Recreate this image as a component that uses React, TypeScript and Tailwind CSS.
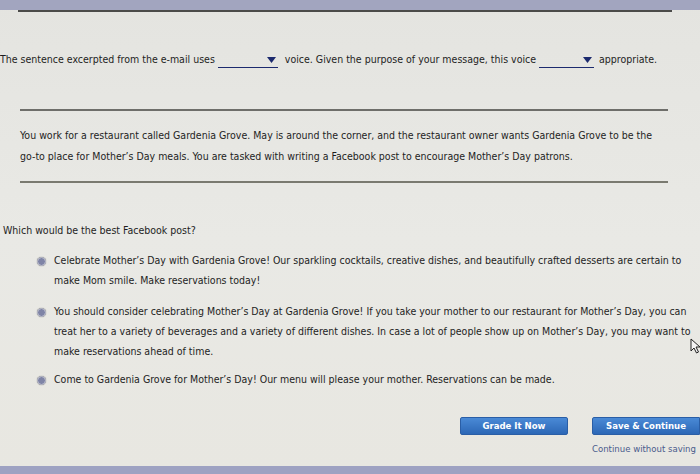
const font = { fontFamily: '"DejaVu Sans Condensed", "DejaVu Sans", sans-serif' };

function Blank({ width }: { width: string }) {
  return (
    <span className={`inline-flex items-end justify-end ${width} h-[14px] border-b border-[#1c2a6e] mx-[3px] align-bottom`}>
      <svg width="9" height="6" viewBox="0 0 9 6" className="mb-[4px] mr-[2px]">
        <path d="M0 0 L9 0 L4.5 6 Z" fill="#1c2a6e" />
      </svg>
    </span>
  );
}

function Radio() {
  return (
    <span className="shrink-0 w-[9px] h-[9px] rounded-full bg-[#7f84a6] border border-[#c4c6d4] shadow-[0_0_1px_#666] mt-[3px]" />
  );
}

const options = [
  ["Celebrate Mother’s Day with Gardenia Grove! Our sparkling cocktails, creative dishes, and beautifully crafted desserts are certain to", "make Mom smile. Make reservations today!"],
  ["You should consider celebrating Mother’s Day at Gardenia Grove! If you take your mother to our restaurant for Mother’s Day, you can", "treat her to a variety of beverages and a variety of different dishes. In case a lot of people show up on Mother’s Day, you may want to", "make reservations ahead of time."],
  ["Come to Gardenia Grove for Mother’s Day! Our menu will please your mother. Reservations can be made."],
];

const spacing = ['mt-[15px]', 'mt-[15px]', 'mt-[12px]'];

export default function App() {
  return (
    <div className="relative w-[700px] h-[474px] overflow-hidden bg-gradient-to-b from-[#e4e4e0] via-[#e9e9e5] to-[#e8e7e1] text-[#1e1e1e] text-[10.5px] flex flex-col" style={font}>
      <div className="h-[10px] bg-[#a2a5bf] shrink-0" />
      <div className="ml-[18px] w-[654px] h-[2px] bg-[#4b4b49] shrink-0" />

      <div className="mt-[42px] h-[14px] flex items-end whitespace-nowrap">
        <span>The sentence excerpted from the e-mail uses</span>
        <Blank width="w-[60px]" />
        <span className="ml-[4px]">voice. Given the purpose of your message, this voice</span>
        <Blank width="w-[55px]" />
        <span className="ml-[2px]">appropriate.</span>
      </div>

      <div className="mt-[41px] ml-[20px] w-[648px] h-[2px] bg-[#6e6e6a] shrink-0" />

      <div className="pl-[20px] pt-[14px] leading-[21px] whitespace-nowrap">
        <div>You work for a restaurant called Gardenia Grove. May is around the corner, and the restaurant owner wants Gardenia Grove to be the</div>
        <div>go-to place for Mother’s Day meals. You are tasked with writing a Facebook post to encourage Mother’s Day patrons.</div>
      </div>

      <div className="mt-[14px] ml-[20px] w-[648px] h-[2px] bg-[#7a7a70] shrink-0" />

      <div className="mt-[40px] pl-[3px]">Which would be the best Facebook post?</div>

      <div className="pl-[37px] flex flex-col">
        {options.map((lines, i) => (
          <div key={i} className={`flex gap-[8px] ${spacing[i]}`}>
            <Radio />
            <div className="leading-[20px] -mt-[4px] whitespace-nowrap">
              {lines.map((l, j) => (
                <div key={j}>{l}</div>
              ))}
            </div>
          </div>
        ))}
      </div>

      <div className="mt-[28px] flex justify-end gap-[24px] text-white font-bold text-[9.5px]">
        <button className="w-[108px] h-[18px] rounded-[2px] bg-gradient-to-b from-[#4a8ad6] to-[#2c67b6] border border-[#2a5ea6]">Grade It Now</button>
        <button className="w-[108px] h-[18px] rounded-l-[2px] bg-gradient-to-b from-[#4a8ad6] to-[#2c67b6] border border-[#2a5ea6]">Save &amp; Continue</button>
      </div>
      <div className="mt-[7px] ml-[592px] text-[#4a5b8c] text-[9.5px]">Continue without saving</div>

      <div className="mt-auto h-[8px] bg-[#9ea2c2] shrink-0" />

      <svg className="absolute left-[690px] top-[338px]" width="12" height="16" viewBox="0 0 12 16">
        <path d="M1 1 L1 13 L4 10 L6.5 15 L8.5 14 L6 9 L10 9 Z" fill="#f4f4f4" stroke="#222" strokeWidth="1" />
      </svg>
    </div>
  );
}
